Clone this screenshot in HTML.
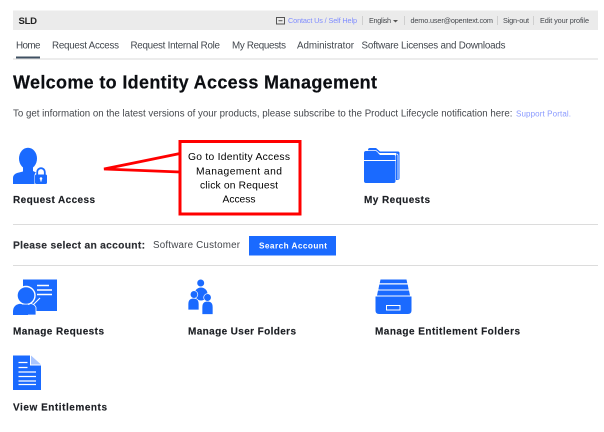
<!DOCTYPE html>
<html lang="en">
<head>
<meta charset="utf-8">
<title>Identity Access Management</title>
<style>
html,body{margin:0;padding:0;background:#fff;width:604px;height:432px;overflow:hidden}
svg{display:block;font-family:"Liberation Sans",sans-serif;filter:blur(.3px)}
.n{font-size:9.800px;fill:#41464d}
.t{font-size:7.300px;fill:#45484d}
.b{font-size:10px;font-weight:700;fill:#1c1f24;stroke:#1c1f24;stroke-width:.15px}
.c{font-size:10.300px;fill:#000;text-anchor:middle}
</style>
</head>
<body>
<svg width="604" height="432" viewBox="0 0 604 432" xmlns="http://www.w3.org/2000/svg">
<rect width="604" height="432" fill="#fff"/>

<!-- top bar -->
<rect x="13" y="10.500" width="585" height="19.500" fill="#ebebeb"/>
<text x="18.500" y="24" font-size="9.500" font-weight="700" fill="#222" textLength="18.500">SLD</text>
<path d="M276.500 17.500h8v6.500h-8z" fill="none" stroke="#555" stroke-width="1"/>
<path d="M278.500 20.700h4" stroke="#555" stroke-width="1"/>
<text class="t" x="288" y="23" style="fill:#7f8cff" textLength="69">Contact Us / Self Help</text>
<path d="M362.500 16v9M404.500 16v9M497.500 16v9M533.500 16v9" stroke="#cfcfcf" stroke-width="1"/>
<text class="t" x="369" y="23" textLength="22">English</text>
<path d="M393 20h5l-2.500 2.500z" fill="#555"/>
<text class="t" x="410.500" y="23" textLength="82.500">demo.user@opentext.com</text>
<text class="t" x="503" y="23" textLength="26">Sign-out</text>
<text class="t" x="540" y="23" textLength="49">Edit your profile</text>

<!-- nav -->
<text class="n" x="16" y="48.500" textLength="24.500">Home</text>
<text class="n" x="52" y="48.500" textLength="67">Request Access</text>
<text class="n" x="130.500" y="48.500" textLength="89.500">Request Internal Role</text>
<text class="n" x="232" y="48.500" textLength="54">My Requests</text>
<text class="n" x="297" y="48.500" textLength="57">Administrator</text>
<text class="n" x="361.500" y="48.500" textLength="144">Software Licenses and Downloads</text>
<rect x="13" y="58" width="585" height="2" fill="#ececec"/>
<rect x="16" y="56.500" width="24" height="2" fill="#3f5062"/>

<!-- heading -->
<text x="13" y="88.500" font-size="18" font-weight="700" fill="#0c0e12" stroke="#0c0e12" stroke-width=".2" textLength="364">Welcome to Identity Access Management</text>
<text x="13" y="116.500" font-size="9.700" fill="#44474c" textLength="499.500">To get information on the latest versions of your products, please subscribe to the Product Lifecycle notification here:</text>
<text x="516" y="116.500" font-size="8" fill="#8a9aff" textLength="55">Support Portal.</text>

<!-- Request Access icon -->
<ellipse cx="28" cy="158.500" rx="9" ry="10.800" fill="#1a6aff"/>
<path d="M23 165h10v6l3 1.500q-1.500 1-1.500 3.500v8H13v-6q0-3.500 4-5l6-1.500z" fill="#1a6aff"/>
<path d="M37.200 175v-3a3.800 3.800 0 0 1 7.600 0v3" fill="none" stroke="#1a6aff" stroke-width="1.800"/>
<rect x="35" y="174.500" width="12" height="9.500" rx="1.500" fill="#1a6aff"/>
<circle cx="41" cy="178.500" r="1.300" fill="#fff"/>
<rect x="40.400" y="178.500" width="1.200" height="3" fill="#fff"/>
<text class="b" x="13" y="203" textLength="82">Request Access</text>

<!-- My Requests icon -->
<path d="M368 150q0-2 2-2h6l4 3.500h18q1.500 0 1.500 1.500v25q0 2-2 2H396v-27h-28z" fill="#1a6aff"/>
<path d="M364 153q0-2 2-2h10l4 4h14q1.500 0 1.500 1.500V181q0 2-2 2H366q-2 0-2-2z" fill="#1a6aff"/>
<path d="M368 150.500h8l4 3.500h16.500q1.500 0 1.500 1.500v24" fill="none" stroke="#fff" stroke-width=".8"/>
<path d="M364 160.500h32" stroke="#fff" stroke-width="1"/>
<text class="b" x="364" y="203" textLength="66">My Requests</text>

<rect x="13" y="224" width="585" height="1" fill="#dcdcdc"/>

<!-- account row -->
<text x="13" y="248.500" font-size="10.300" font-weight="700" fill="#2c2e33" stroke="#2c2e33" stroke-width=".15" textLength="132">Please select an account:</text>
<text x="153" y="248" font-size="9.800" fill="#44474c" textLength="87">Software Customer</text>
<rect x="249" y="236" width="87" height="19.500" fill="#1a6aff"/>
<text x="259" y="248.500" font-size="8.200" font-weight="700" fill="#fff" textLength="68">Search Account</text>

<rect x="13" y="265" width="585" height="1" fill="#dcdcdc"/>

<!-- Manage Requests icon -->
<rect x="23" y="279.500" width="34" height="31.500" fill="#1a6aff"/>
<path d="M37 285.500h12M37 290h15M37 294.500h15" stroke="#fff" stroke-width="1.500"/>
<path d="M33 305l7-7" stroke="#fff" stroke-width="1.100"/>
<path d="M13 315v-5q0-5 6-6.500h12q4 1 5 4v7.500z" fill="#1a6aff" stroke="#fff" stroke-width=".8"/>
<circle cx="26" cy="295.500" r="9" fill="#1a6aff" stroke="#fff" stroke-width="1.400"/>
<path d="M13 315v-4q0-4 5-6.500h10v10.500z" fill="#1a6aff"/>
<text class="b" x="13" y="334.500" textLength="91">Manage Requests</text>

<!-- Manage User Folders icon -->
<circle cx="200.700" cy="283" r="3.500" fill="#1a6aff"/>
<circle cx="201" cy="294" r="6.500" fill="#1a6aff"/>
<path d="M188 310v-6q0-5.800 5.500-5.800t5.500 5.800v6z" fill="#1a6aff" stroke="#fff" stroke-width=".7"/>
<circle cx="194" cy="294.500" r="3.800" fill="#1a6aff" stroke="#fff" stroke-width=".7"/>
<path d="M202 314.500v-7.500q0-5.800 5.500-5.800t5.500 5.800v7.500z" fill="#1a6aff" stroke="#fff" stroke-width=".7"/>
<circle cx="207.500" cy="297.500" r="3.800" fill="#1a6aff" stroke="#fff" stroke-width=".7"/>
<text class="b" x="188" y="334.500" textLength="108">Manage User Folders</text>

<!-- Manage Entitlement Folders icon -->
<path d="M380.500 279.500h26l.8 3.800h-27.600z" fill="#1a6aff"/>
<path d="M379.300 284.500h28.400l.9 5h-30.200z" fill="#1a6aff"/>
<path d="M378 290.500h31l1 5h-33z" fill="#1a6aff"/>
<path d="M375.500 296.500h36v14q0 3.500-3.500 3.500h-29q-3.500 0-3.500-3.500z" fill="#1a6aff"/>
<rect x="386.500" y="305.500" width="13.500" height="4.500" fill="none" stroke="#fff" stroke-width="1"/>
<text class="b" x="375" y="334.500" textLength="145">Manage Entitlement Folders</text>

<!-- View Entitlements icon -->
<path d="M13 355.500h17v10h11v24.500H13z" fill="#1a6aff"/>
<path d="M31 355.500l10 9h-10z" fill="#a9c5ff"/>
<path d="M18.500 362.500h9M18.500 367.500h9M18.500 372h17.500M18.500 376.500h17.500M18.500 381h17.500M18.500 384.500h17.500" stroke="#fff" stroke-width="1.300"/>
<text class="b" x="13" y="410.500" textLength="94">View Entitlements</text>

<!-- callout -->
<path d="M180 153.500L104 169l76 3" fill="#fff" stroke="#f00" stroke-width="2.800"/>
<rect x="180" y="141.500" width="120" height="72.500" fill="#fff" stroke="#f00" stroke-width="3"/>
<text class="c" x="239" y="160" textLength="102">Go to Identity Access</text>
<text class="c" x="239" y="174.500" textLength="86">Management and</text>
<text class="c" x="239" y="188.500" textLength="78">click on Request</text>
<text class="c" x="239" y="202.500" textLength="33">Access</text>
</svg>
</body>
</html>
